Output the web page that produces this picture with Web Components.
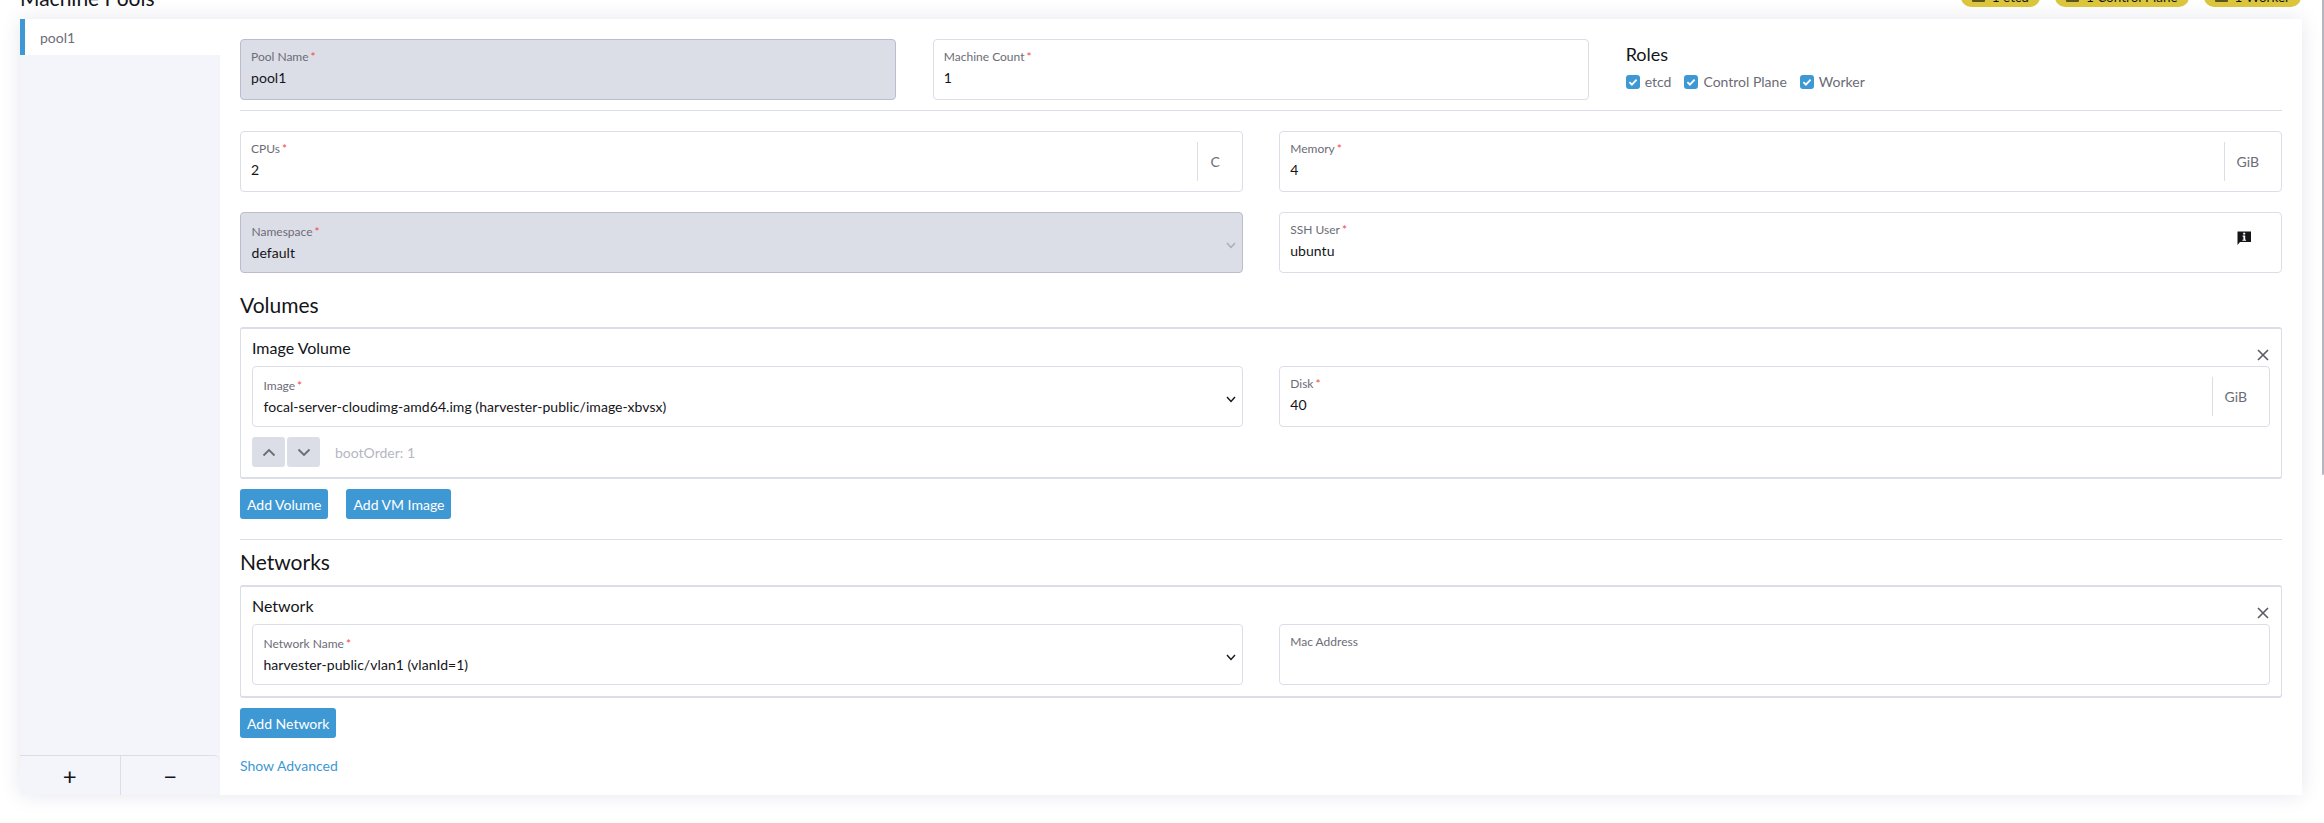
<!DOCTYPE html>
<html>
<head>
<meta charset="utf-8">
<title>Machine Pools</title>
<style>
  html, body { margin: 0; height: 100%; overflow: hidden; background: #fff; }
  body { font-family: Lato, "Liberation Sans", sans-serif; font-size: 14px; color: #141419; }
</style>
</head>
<body>
<pool-page>
  <pool-header slot="header" title-text="Machine Pools">
    <role-pill>1 etcd</role-pill>
    <role-pill>1 Control Plane</role-pill>
    <role-pill>1 Worker</role-pill>
  </pool-header>

  <pool-sidebar slot="sidebar" active="pool1"></pool-sidebar>

  <!-- Pool name / count / roles -->
  <form-grid cols="3">
    <text-field label="Pool Name" value="pool1" required disabled></text-field>
    <text-field label="Machine Count" value="1" required></text-field>
    <roles-box></roles-box>
  </form-grid>
  <h-rule style="margin:10px 0 20px"></h-rule>

  <form-grid cols="2">
    <text-field label="CPUs" value="2" suffix="C" required></text-field>
    <text-field label="Memory" value="4" suffix="GiB" required></text-field>
  </form-grid>
  <form-grid cols="2" style="margin-top:20px">
    <text-field label="Namespace" value="default" required disabled select></text-field>
    <text-field label="SSH User" value="ubuntu" required info></text-field>
  </form-grid>

  <section-title style="margin-top:19px">Volumes</section-title>
  <item-box heading="Image Volume">
    <form-grid cols="2">
      <text-field label="Image" value="focal-server-cloudimg-amd64.img (harvester-public/image-xbvsx)" required select></text-field>
      <text-field label="Disk" value="40" suffix="GiB" required></text-field>
    </form-grid>
    <boot-order order="1"></boot-order>
  </item-box>
  <button-row>
    <blue-button>Add Volume</blue-button>
    <blue-button>Add VM Image</blue-button>
  </button-row>
  <h-rule style="margin:20px 0 9px"></h-rule>

  <section-title style="margin-bottom:10px">Networks</section-title>
  <item-box heading="Network" tight>
    <form-grid cols="2">
      <text-field label="Network Name" value="harvester-public/vlan1 (vlanId=1)" required select></text-field>
      <text-field label="Mac Address"></text-field>
    </form-grid>
  </item-box>
  <button-row>
    <blue-button>Add Network</blue-button>
  </button-row>
  <show-advanced>Show Advanced</show-advanced>
</pool-page>

<script>
// Small helper so each element just declares its css + html
function shadow(el, html) {
    el.attachShadow({ mode: 'open' }).innerHTML = html;
}

const CHEVRON = (color) => `<svg width="10" height="7" viewBox="0 0 10 7"><path d="M1 1l4 4.4L9 1" fill="none" stroke="${color}" stroke-width="1.4"/></svg>`;

/* Page frame: clipped header, card with sidebar + main column, fake scrollbar */
class PoolPage extends HTMLElement {
    connectedCallback() {
        shadow(this, `
            <style>
                :host { display: block; height: 100%; position: relative; }
                .frame { display: flex; flex-direction: column; height: 100%; padding: 0 22px 28px 20px; box-sizing: border-box; }
                .card { flex: 1; display: flex; background: #fff; box-shadow: 0 0 20px #e6e7ee; min-height: 0; }
                .side { width: 200px; flex: none; display: flex; }
                .main { flex: 1; min-width: 0; padding: 20px 20px 0; }
                .scrollbar { position: absolute; top: 0; right: 0; width: 2px; height: 475px; background: #b6b6c2; border-radius: 0 0 1px 1px; }
            </style>
            <div class="frame">
                <slot name="header"></slot>
                <div class="card">
                    <div class="side"><slot name="sidebar"></slot></div>
                    <div class="main"><slot></slot></div>
                </div>
            </div>
            <div class="scrollbar"></div>
        `);
    }
}

/* Header row, scrolled out of view except its bottom edge */
class PoolHeader extends HTMLElement {
    connectedCallback() {
        shadow(this, `
            <style>
                :host { display: flex; height: 19px; flex: none; overflow: hidden; position: relative; z-index: 1; }
                .inner { display: flex; width: 100%; height: 19px; position: relative; }
                h2 { margin: 0; font-size: 21px; font-weight: 400; line-height: 30px; color: #141419; position: absolute; left: 0; bottom: 6px; white-space: nowrap; }
                .pills { display: flex; gap: 15px; position: absolute; right: 1px; bottom: 12.5px; }
            </style>
            <div class="inner">
                <h2>${this.getAttribute('title-text')}</h2>
                <div class="pills"><slot></slot></div>
            </div>
        `);
    }
}

class RolePill extends HTMLElement {
    connectedCallback() {
        shadow(this, `
            <style>
                :host { display: inline-flex; align-items: center; gap: 7px; height: 20px; padding: 0 11px; border-radius: 10px; background: #dac53d; color: #141419; font-size: 13.5px; white-space: nowrap; }
                i { display: block; width: 13px; height: 10px; background: #5d5520; border-radius: 1px; }
            </style>
            <i></i><slot></slot>
        `);
    }
}

/* Left column listing the pools, with add / remove buttons at the bottom */
class PoolSidebar extends HTMLElement {
    connectedCallback() {
        shadow(this, `
            <style>
                :host { display: flex; flex-direction: column; width: 200px; background: #f4f5fa; }
                .row { height: 36px; box-sizing: border-box; display: flex; align-items: center; background: #fff; border-left: 5px solid #3d98d3; padding-left: 15px; color: #6c6c76; font-size: 14px; }
                .spacer { flex: 1; }
                .foot { display: flex; height: 40px; box-sizing: border-box; border-top: 1px solid #dcdee7; border-radius: 0 6px 0 0; }
                .foot span { flex: 1; display: flex; align-items: center; justify-content: center; font-size: 24px; line-height: 1; color: #141419; }
                .foot span + span { border-left: 1px solid #dcdee7; }
            </style>
            <div class="row">${this.getAttribute('active')}</div>
            <div class="spacer"></div>
            <div class="foot"><span>+</span><span>−</span></div>
        `);
    }
}

class FormGrid extends HTMLElement {
    connectedCallback() {
        const cols = this.getAttribute('cols') || 2;
        shadow(this, `
            <style>
                :host { display: grid; grid-template-columns: repeat(${cols}, minmax(0, 1fr)); column-gap: 36.5px; }
            </style>
            <slot></slot>
        `);
    }
}

/* Labeled input box. Attributes: label, value, required, disabled, select, suffix, info */
class TextField extends HTMLElement {
    connectedCallback() {
        const label = this.getAttribute('label');
        const value = this.getAttribute('value') || '';
        const suffix = this.getAttribute('suffix');
        const required = this.hasAttribute('required');
        const disabled = this.hasAttribute('disabled');
        const select = this.hasAttribute('select');
        const info = this.hasAttribute('info');
        shadow(this, `
            <style>
                :host { display: block; height: 61px; }
                .box { height: 61px; box-sizing: border-box; display: flex; border: 1px solid #dcdee7; border-radius: 4px; background: #fff; }
                .box.disabled { background: #dcdee7; border-color: #bcbdcc; }
                .body { flex: 1; min-width: 0; padding: ${select ? 11 : 9}px 10px 0 ${select ? 10.5 : 10}px; }
                .label { font-size: 12px; line-height: 16px; color: #6c6c76; white-space: nowrap; }
                .label b { color: #f64747; font-weight: 400; margin-left: 2px; }
                .value { margin-top: 4px; font-size: 14px; line-height: 17px; letter-spacing: 0.05px; color: #141419; white-space: nowrap; }
                .suffix { flex: none; align-self: center; height: 39px; display: flex; align-items: center; padding: 0 22px 0 12px; border-left: 1px solid #dcdee7; color: #6c6c76; font-size: 14px; }
                .chev { flex: none; align-self: center; display: flex; padding: 6px 6px 0 0; }
                .info { flex: none; padding: 18px 30px 0 0; }
                svg { display: block; }
            </style>
            <div class="box ${disabled ? 'disabled' : ''}">
                <div class="body">
                    <div class="label">${label}${required ? '<b>*</b>' : ''}</div>
                    <div class="value">${value}</div>
                </div>
                ${suffix ? `<div class="suffix">${suffix}</div>` : ''}
                ${select ? `<div class="chev">${CHEVRON(disabled ? '#a9abb8' : '#141419')}</div>` : ''}
                ${info ? `<div class="info"><svg width="14" height="14" viewBox="0 0 14 14"><path d="M0.5 0.5H14V11H3L0.5 14Z" fill="#141419"/><path d="M6.2 1.8h2v1.7h-2zM5.6 4.6h2.6v4.1h.9v1.1H5.4V8.7h1V5.7h-.8z" fill="#fff"/></svg></div>` : ''}
            </div>
        `);
    }
}

class RolesBox extends HTMLElement {
    connectedCallback() {
        const check = `<svg width="14" height="14" viewBox="0 0 14 14"><rect width="14" height="14" rx="3" fill="#3d98d3"/><path d="M3.4 7.2l2.5 2.5 4.7-5" fill="none" stroke="#fff" stroke-width="1.8"/></svg>`;
        const roles = ['etcd', 'Control Plane', 'Worker'];
        shadow(this, `
            <style>
                :host { display: block; }
                h3 { margin: 4px 0 0; font-size: 18px; font-weight: 400; line-height: 22px; color: #141419; }
                .list { display: flex; gap: 13px; margin-top: 10px; }
                label { display: flex; align-items: center; gap: 5px; color: #6c6c76; font-size: 14px; line-height: 14px; }
                svg { display: block; }
            </style>
            <h3>Roles</h3>
            <div class="list">
                ${roles.map(r => `<label>${check}<span>${r}</span></label>`).join('')}
            </div>
        `);
    }
}

class HRule extends HTMLElement {
    connectedCallback() {
        shadow(this, `<style>:host { display: block; height: 1px; background: #dcdee7; }</style>`);
    }
}

class SectionTitle extends HTMLElement {
    connectedCallback() {
        shadow(this, `
            <style>:host { display: block; font-size: 21px; line-height: 26px; color: #141419; margin-bottom: 9px; }</style>
            <slot></slot>
        `);
    }
}

/* Bordered group for one volume / network, with remove X in the corner */
class ItemBox extends HTMLElement {
    connectedCallback() {
        const tight = this.hasAttribute('tight');
        shadow(this, `
            <style>
                :host { display: block; position: relative; box-sizing: border-box; padding: 9px 11px ${tight ? 11 : 10}px; border: 1px solid #dcdee7; border-top-width: 2px; border-bottom-width: 2px; border-radius: 3px; }
                .title { font-size: 16px; line-height: 20px; color: #141419; margin-bottom: 8px; }
                .close { position: absolute; top: 20px; right: 12px; display: block; }
            </style>
            <div class="title">${this.getAttribute('heading')}</div>
            <svg class="close" width="12" height="12" viewBox="0 0 12 12"><path d="M1 1l10 10M11 1L1 11" stroke="#5a5a66" stroke-width="1.6" fill="none"/></svg>
            <slot></slot>
        `);
    }
}

/* Up / down order buttons under the image field */
class BootOrder extends HTMLElement {
    connectedCallback() {
        shadow(this, `
            <style>
                :host { display: flex; align-items: center; margin-top: 10px; height: 30px; }
                .btn { width: 33px; height: 30px; display: flex; align-items: center; justify-content: center; background: #dcdee7; border-radius: 3px; margin-right: 2px; }
                .note { margin-left: 13px; color: #b6b6c2; font-size: 14px; }
                svg { display: block; }
            </style>
            <span class="btn"><svg width="14" height="9" viewBox="0 0 14 9"><path d="M1.5 7.5L7 2l5.5 5.5" fill="none" stroke="#6c6c76" stroke-width="1.8"/></svg></span>
            <span class="btn"><svg width="14" height="9" viewBox="0 0 14 9"><path d="M1.5 1.5L7 7l5.5-5.5" fill="none" stroke="#6c6c76" stroke-width="1.8"/></svg></span>
            <span class="note">bootOrder: ${this.getAttribute('order')}</span>
        `);
    }
}

class ButtonRow extends HTMLElement {
    connectedCallback() {
        shadow(this, `
            <style>:host { display: flex; gap: 18px; margin-top: 10px; }</style>
            <slot></slot>
        `);
    }
}

class BlueButton extends HTMLElement {
    connectedCallback() {
        shadow(this, `
            <style>
                :host { display: inline-flex; align-items: center; height: 30px; padding: 0 7px; background: #3d98d3; color: #fff; border-radius: 3px; font-size: 14px; white-space: nowrap; }
            </style>
            <slot></slot>
        `);
    }
}

class ShowAdvanced extends HTMLElement {
    connectedCallback() {
        shadow(this, `
            <style>:host { display: block; margin-top: 19px; color: #3d98d3; font-size: 14px; line-height: 18px; }</style>
            <slot></slot>
        `);
    }
}

customElements.define('pool-page', PoolPage);
customElements.define('pool-header', PoolHeader);
customElements.define('role-pill', RolePill);
customElements.define('pool-sidebar', PoolSidebar);
customElements.define('form-grid', FormGrid);
customElements.define('text-field', TextField);
customElements.define('roles-box', RolesBox);
customElements.define('h-rule', HRule);
customElements.define('section-title', SectionTitle);
customElements.define('item-box', ItemBox);
customElements.define('boot-order', BootOrder);
customElements.define('button-row', ButtonRow);
customElements.define('blue-button', BlueButton);
customElements.define('show-advanced', ShowAdvanced);
</script>
</body>
</html>
